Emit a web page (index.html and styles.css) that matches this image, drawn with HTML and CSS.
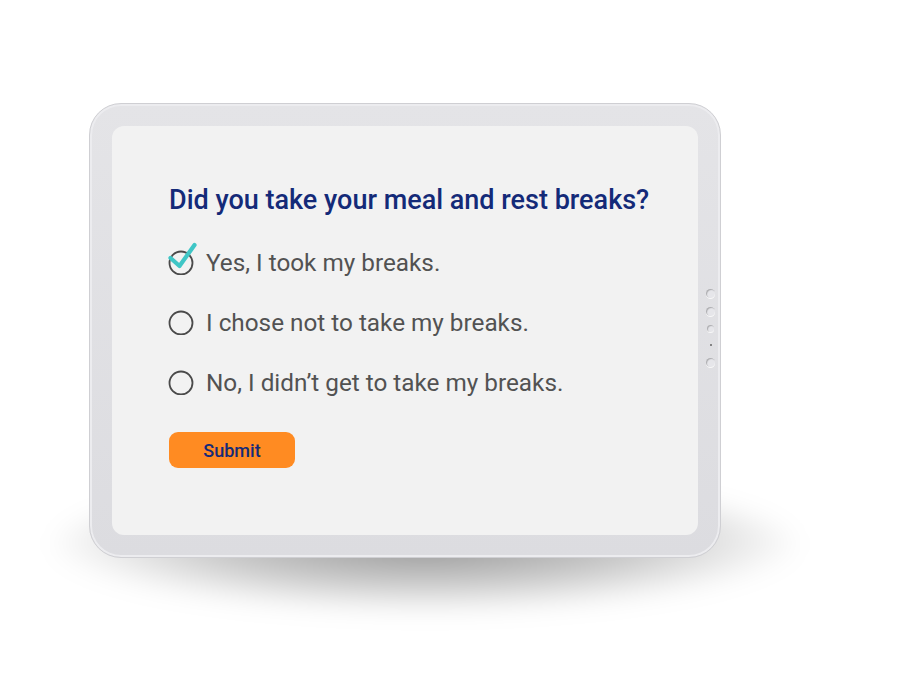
FILE: index.html
```html
<!DOCTYPE html>
<html>
<head>
<meta charset="utf-8">
<link rel="stylesheet" href="styles.css">
</head>
<body>
<div class="tablet">
  <div class="screen">
    <h1 class="question">Did you take your meal and rest breaks?</h1>
    <ul class="options">
      <li class="option">
        <svg class="radio" width="30" height="34" viewBox="0 0 30 34">
          <circle cx="13" cy="22" r="11.5" fill="none" stroke="#4a4a4a" stroke-width="1.8"/>
          <path d="M2.5 17 L11.5 25 L26.5 4" fill="none" stroke="#3fc6c6" stroke-width="4.2" stroke-linecap="round" stroke-linejoin="round"/>
        </svg>
        <span>Yes, I took my breaks.</span>
      </li>
      <li class="option">
        <svg class="radio" width="30" height="34" viewBox="0 0 30 34">
          <circle cx="13" cy="22" r="11.5" fill="none" stroke="#4a4a4a" stroke-width="1.8"/>
        </svg>
        <span>I chose not to take my breaks.</span>
      </li>
      <li class="option">
        <svg class="radio" width="30" height="34" viewBox="0 0 30 34">
          <circle cx="13" cy="22" r="11.5" fill="none" stroke="#4a4a4a" stroke-width="1.8"/>
        </svg>
        <span>No, I didn’t get to take my breaks.</span>
      </li>
    </ul>
    <button class="submit">Submit</button>
  </div>
  <div class="side-buttons">
    <span class="dot big"></span>
    <span class="dot big"></span>
    <span class="dot small"></span>
    <span class="dot tiny"></span>
    <span class="dot big"></span>
  </div>
</div>
</body>
</html>
```

FILE: styles.css
```css
html {
  margin: 0;
  padding: 0;
  background: #ffffff;
}
body {
  margin: 0;
  padding: 0;
  background: transparent;
  width: 900px;
  height: 675px;
  overflow: hidden;
  font-family: Roboto, "Liberation Sans", Arial, sans-serif;
}
.tablet {
  position: relative;
  box-sizing: border-box;
  width: 632px;
  height: 455px;
  margin: 103px 0 0 89px;
  padding: 23px;
  border-radius: 32px;
  background: linear-gradient(180deg, #e4e4e7 0%, #dcdce0 100%);
  border: 1px solid #cfcfd3;
  box-shadow: inset 0 0 0 2px #ececef;
}
.tablet::before {
  content: "";
  position: absolute;
  left: -40px;
  right: -80px;
  bottom: -55px;
  height: 130px;
  border-radius: 50%;
  background: radial-gradient(ellipse at 50% 45%, rgba(0,0,0,0.42) 0%, rgba(0,0,0,0.22) 40%, rgba(0,0,0,0) 72%);
  filter: blur(12px);
  z-index: -1;
}
.screen {
  box-sizing: border-box;
  width: 586px;
  height: 409px;
  margin: -1px;
  border-radius: 12px;
  background: #f2f2f2;
  padding: 57px 0 0 57px;
}
.question {
  margin: 0 0 15px 0;
  font-size: 27px;
  font-weight: 500;
  line-height: 34px;
  color: #142a78;
  letter-spacing: 0;
}
.options {
  list-style: none;
  margin: 0;
  padding: 0;
}
.option {
  display: flex;
  align-items: center;
  height: 60px;
  font-size: 24.3px;
  color: #525252;
}
.radio {
  flex: none;
  margin: -8px 8px 0 -1px;
}
.submit {
  display: block;
  margin-top: 20px;
  width: 126px;
  height: 36px;
  border: none;
  border-radius: 9px;
  background: #ff8b22;
  color: #142a78;
  font-family: Roboto, "Liberation Sans", Arial, sans-serif;
  font-size: 18px;
  font-weight: 500;
  padding: 0;
}
.side-buttons {
  position: absolute;
  right: 5px;
  top: 185px;
  display: flex;
  flex-direction: column;
  align-items: center;
  gap: 9px;
}
.dot {
  display: block;
  border-radius: 50%;
  background: #e6e6ea;
  box-shadow: inset 1px 1px 1px rgba(0,0,0,0.25), 0 1px 0 #f8f8f8;
}
.dot.big { width: 9px; height: 9px; }
.dot.small { width: 7px; height: 7px; }
.dot.tiny { width: 2px; height: 2px; background: #666; box-shadow: none; margin: 3px 0; }
```
